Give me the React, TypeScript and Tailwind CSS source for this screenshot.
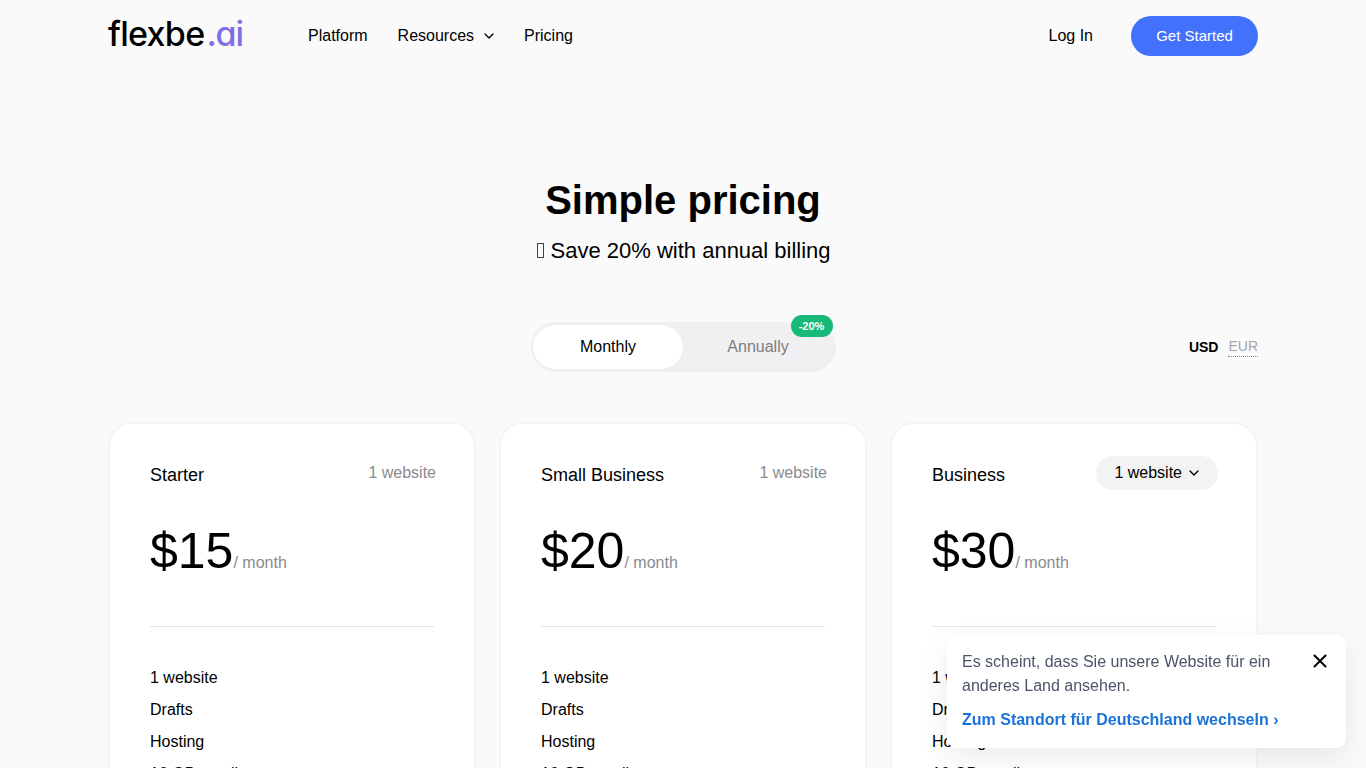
import React from 'react'
import { ChevronDown, X } from 'lucide-react'

const font = { sans: "font-['Liberation_Sans',Arial,sans-serif]" }

const features = ['1 website', 'Drafts', 'Hosting', '10 GB email']

const plans = [
  { name: 'Starter', price: '$15', select: false },
  { name: 'Small Business', price: '$20', select: false },
  { name: 'Business', price: '$30', select: true },
]

function Logo() {
  return (
    <div className="font-['Inter',sans-serif] [font-feature-settings:'cv11'] text-[34px] font-medium leading-[40px] tracking-[-0.7px] text-black w-[135px] -mt-[3px] whitespace-nowrap">
      flexbe<span className="text-[#7c6fe8] ml-[2px] tracking-[-1.2px]">.ai</span>
    </div>
  )
}

function PlanCard({ name, price, select }: { name: string; price: string; select: boolean }) {
  return (
    <div className="bg-white rounded-[24px] border-2 border-[#f5f5f6] pt-[32px] px-[40px]">
      <div className="flex justify-between items-start h-[34px]">
        <div className="text-[18px] leading-[22px] text-black mt-[8px]">{name}</div>
        {select ? (
          <div className="flex items-center gap-[4px] h-[34px] bg-[#f3f3f4] rounded-full pl-[18px] pr-[16px] -mr-[2px] text-[16px] text-black">
            1 website
            <ChevronDown size={16} strokeWidth={2} />
          </div>
        ) : (
          <div className="text-[16px] leading-[34px] text-[#8a8a8e] -mr-[2px]">1 website</div>
        )}
      </div>
      <div className="flex items-baseline mt-[31px] h-[60px]">
        <span className="text-[50px] leading-[60px] text-black">{price}</span>
        <span className="text-[16px] text-[#8a8a8e]">/ month</span>
      </div>
      <div className="h-px bg-[#e4e4e7] mt-[45px]" />
      <ul className="mt-[35px] text-[16px] leading-[32px] text-black">
        {features.map((f) => (
          <li key={f}>{f}</li>
        ))}
      </ul>
    </div>
  )
}

export default function App() {
  return (
    <div className={`${font.sans} h-screen overflow-hidden bg-[#fafafa]`}>
      <header className="w-[1150px] mx-auto flex items-center justify-between h-[71px]">
        <div className="flex items-center">
          <Logo />
          <nav className="flex items-center ml-[65px] text-[16px] text-black">
            <a>Platform</a>
            <a className="flex items-center ml-[30px]">
              Resources
              <ChevronDown size={16} strokeWidth={2} className="ml-[7px]" />
            </a>
            <a className="ml-[27px]">Pricing</a>
          </nav>
        </div>
        <div className="flex items-center">
          <a className="text-[16px] text-black">Log In</a>
          <button className="ml-[38px] w-[127px] h-[40px] pt-px rounded-full bg-[#4272fb] text-white text-[15px]">
            Get Started
          </button>
        </div>
      </header>

      <section className="text-center pt-[103px]">
        <h1 className="text-[40px] leading-[52px] font-bold text-black">Simple pricing</h1>
        <p className="text-[22px] leading-[30px] text-black mt-[10px] pl-[2px]">
          <span className="inline-block w-[7px] h-[15px] border border-[#444]" /> Save 20% with annual billing
        </p>
      </section>

      <div className="w-[1150px] mx-auto relative mt-[56px] h-[50px] flex justify-center">
        <div className="relative flex w-[305px] h-[50px] rounded-full bg-[#f0f0f2] p-[3px] pl-[2px] text-[16px]">
          <div className="w-[150px] h-[44px] pl-px rounded-full bg-white flex items-center justify-center text-black shadow-[0_0_2px_rgba(0,0,0,0.04)]">
            Monthly
          </div>
          <div className="w-[150px] h-[44px] pl-px flex items-center justify-center text-[#7d7d82]">Annually</div>
          <span className="absolute right-[3px] -top-[7px] w-[42px] h-[22px] rounded-full bg-[#16b978] text-white text-[11px] font-bold flex items-center justify-center">
            -20%
          </span>
        </div>
        <div className="absolute right-0 top-0 h-[50px] flex items-center gap-[10px] text-[14px]">
          <span className="font-bold text-black">USD</span>
          <span className="text-[#a6a6aa] border-b border-dotted border-[#8a8a8e] leading-[20px] mb-px">EUR</span>
        </div>
      </div>

      <main className="w-[1150px] mx-auto mt-[50px] grid grid-cols-3 gap-[23px]">
        {plans.map((p) => (
          <PlanCard key={p.name} {...p} />
        ))}
      </main>

      <div className="fixed right-[20px] bottom-[20px] w-[399px] h-[113px] bg-white rounded-[10px] shadow-[0_10px_30px_rgba(0,0,0,0.08)] pl-[15px] pr-[15px] pt-[15px]">
        <div className="flex justify-between items-start">
          <p className="text-[16px] leading-[24px] text-[#4a5568] w-[320px]">
            Es scheint, dass Sie unsere Website für ein anderes Land ansehen.
          </p>
          <X size={22} strokeWidth={2.2} className="text-black" />
        </div>
        <a className="block mt-[10px] text-[16px] leading-[24px] font-bold text-[#1a73d8]">
          Zum Standort für Deutschland wechseln ›
        </a>
      </div>
    </div>
  )
}
